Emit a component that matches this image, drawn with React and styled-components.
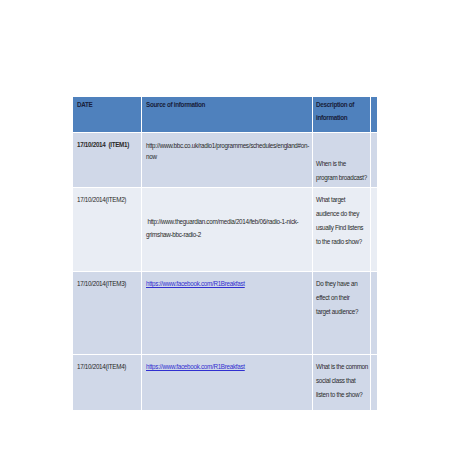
import React from 'react';
import styled, { createGlobalStyle } from 'styled-components';

const GlobalStyle = createGlobalStyle`
  html, body {
    margin: 0;
    padding: 0;
    background: #ffffff;
  }
  body {
    font-family: "Liberation Sans", Arial, sans-serif;
  }
`;

const rows = [
  {
    date: '17/10/2014  (ITEM1)',
    bold: true,
    source: 'http://www.bbc.co.uk/radio1/programmes/schedules/england#on-\nnow',
    sourcePad: '7px',
    sourceLine: 11,
    desc: 'When is the\nprogram broadcast?',
    descPad: '24px',
  },
  {
    date: '17/10/2014(ITEM2)',
    source: ' http://www.theguardian.com/media/2014/feb/06/radio-1-nick-\ngrimshaw-bbc-radio-2',
    sourcePad: '27px',
    sourceLine: 13,
    desc: 'What target\naudience do they\nusually Find listens\nto the radio show?',
    light: true,
  },
  {
    date: '17/10/2014(ITEM3)',
    source: 'https://www.facebook.com/R1Breakfast',
    link: true,
    desc: 'Do they have an\neffect on their\ntarget audience?',
  },
  {
    date: '17/10/2014(ITEM4)',
    source: 'https://www.facebook.com/R1Breakfast',
    link: true,
    desc: 'What is the common\nsocial class that\nlisten to the show?',
  },
];

const App = () => {
  return (
    <>
      <GlobalStyle />
      <Page>
        <Table>
          <HeadCell>DATE</HeadCell>
          <HeadCell>Source of information</HeadCell>
          <HeadCell $narrow>{'Description of\ninformation'}</HeadCell>
          <HeadCell />
          {rows.map((row, index) => (
            <React.Fragment key={index}>
              <Cell $light={row.light}>
                <DateText $bold={row.bold}>{row.date}</DateText>
              </Cell>
              <Cell $light={row.light} $pad={row.sourcePad}>
                {row.link ? (
                  <Link href="#">{row.source}</Link>
                ) : (
                  <Url $line={row.sourceLine}>{row.source}</Url>
                )}
              </Cell>
              <Cell $light={row.light} $pad={row.descPad} $narrow>
                <Desc>{row.desc}</Desc>
              </Cell>
              <Cell $light={row.light} />
            </React.Fragment>
          ))}
        </Table>
      </Page>
    </>
  );
};

const Page = styled.div`
  width: 453px;
  height: 453px;
  padding: 97px 0 0 73px;
  box-sizing: border-box;
`;

const Table = styled.div`
  width: 305px;
  display: grid;
  grid-template-columns: 68px 170px 57px 6px;
  grid-template-rows: 35px 54px 83px 82px 55px;
  gap: 1px;
  background: #ffffff;
`;

const HeadCell = styled.div`
  background: #4f81bd;
  color: #18203a;
  font-weight: bold;
  font-size: 6.3px;
  line-height: 13px;
  padding: 1px 0 0 ${(p) => (p.$narrow ? '3px' : '4px')};
  letter-spacing: -0.3px;
  white-space: pre;
  overflow: hidden;
`;

const Cell = styled.div`
  background: ${(p) => (p.$light ? '#e9edf4' : '#d0d8e8')};
  padding: ${(p) => p.$pad || '5px'} 0 0 ${(p) => (p.$narrow ? '3px' : '4px')};
  font-size: 6.3px;
  color: #2a2a2a;
  letter-spacing: -0.3px;
  box-sizing: border-box;
  overflow: hidden;
`;

const DateText = styled.div`
  font-weight: ${(p) => (p.$bold ? 'bold' : 'normal')};
  line-height: 13px;
  white-space: pre;
`;

const Url = styled.div`
  line-height: ${(p) => p.$line || 12}px;
  white-space: pre;
`;

const Link = styled.a`
  display: block;
  color: #3030d0;
  text-decoration: underline;
  line-height: 13px;
  white-space: pre;
`;

const Desc = styled.div`
  line-height: 14px;
  white-space: pre;
`;

export default App;
